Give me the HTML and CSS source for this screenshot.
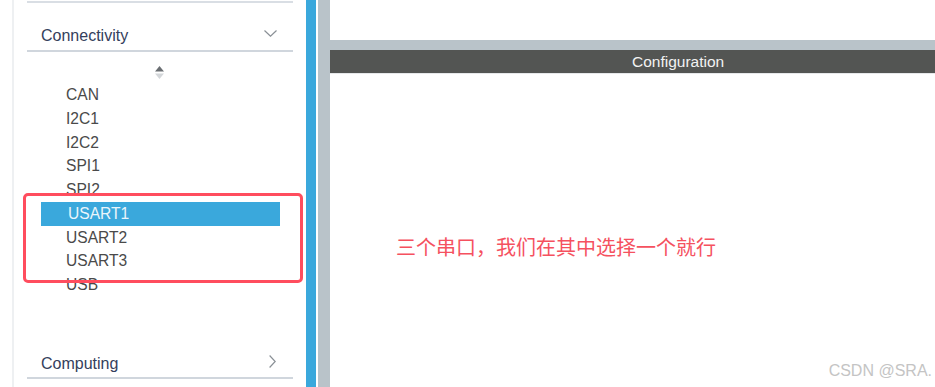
FILE: index.html
```html
<!DOCTYPE html>
<html lang="zh">
<head>
<meta charset="utf-8">
<title>Connectivity</title>
<link rel="stylesheet" href="styles.css">
</head>
<body>
<div class="app">
  <aside class="sidebar">
    <div class="sidebar-inner">
      <div class="rule"></div>
      <div class="cat-header">
        <span class="cat-title">Connectivity</span>
        <svg class="chev-down" width="13" height="7" viewBox="0 0 13 7"><path d="M0.5 0.5 L6.5 6.2 L12.5 0.5" fill="none" stroke="#8a9096" stroke-width="1.2"/></svg>
      </div>
      <div class="scroll-arrows">
        <svg width="9" height="13" viewBox="0 0 9 13"><path d="M4.5 0 L9 5.5 L0 5.5 Z" fill="#6a6e72"/><path d="M0 7.5 L9 7.5 L4.5 13 Z" fill="#d4d7da"/></svg>
      </div>
      <ul class="periph-list">
        <li class="item">CAN</li>
        <li class="item">I2C1</li>
        <li class="item">I2C2</li>
        <li class="item">SPI1</li>
        <li class="item">SPI2</li>
        <li class="item selected">USART1</li>
        <li class="item">USART2</li>
        <li class="item">USART3</li>
        <li class="item">USB</li>
      </ul>
      <div class="cat-header bottom">
        <span class="cat-title">Computing</span>
        <svg class="chev-right" width="7" height="13" viewBox="0 0 7 13"><path d="M0.6 0.5 L6.2 6.5 L0.6 12.5" fill="none" stroke="#8a9096" stroke-width="1.2"/></svg>
      </div>
      <div class="annotation-box"></div>
    </div>
  </aside>
  <div class="blue-bar"></div>
  <div class="split-gap"></div>
  <main class="main">
    <div class="top-pane"></div>
    <section class="config-pane">
      <div class="config-header">Configuration</div>
      <div class="config-body">
        <p class="note">三个串口，我们在其中选择一个就行</p>
        <span class="watermark">CSDN @SRA.</span>
      </div>
    </section>
  </main>
</div>
</body>
</html>
```
FILE: styles.css
```css
* { box-sizing: border-box; }
html, body {
  margin: 0;
  padding: 0;
  width: 935px;
  height: 387px;
  overflow: hidden;
  background: #ffffff;
  font-family: "Liberation Sans", Arial, sans-serif;
}
.app {
  display: flex;
  height: 387px;
}
.sidebar {
  width: 306px;
  flex: 0 0 306px;
  padding-left: 12px;
  background: #ffffff;
}
.sidebar-inner {
  position: relative;
  height: 100%;
  border-left: 2px solid #eef0f2;
  padding: 1px 13px 8px 13px;
  display: flex;
  flex-direction: column;
}
.rule {
  height: 2px;
  background: #d9dee4;
}
.cat-header {
  display: flex;
  align-items: center;
  justify-content: space-between;
  padding: 22px 16px 3px 14px;
  border-bottom: 2px solid #d0d6dd;
  line-height: 22px;
}
.cat-header.bottom {
  margin-top: auto;
  padding-top: 0;
  padding-right: 17px;
}
.cat-title {
  font-size: 16px;
  color: #34405c;
}
.cat-header.bottom .cat-title {
  position: relative;
  top: 1px;
}
.chev-down { margin-top: -6px; }
.chev-right { margin-top: -4px; }
.scroll-arrows {
  display: flex;
  justify-content: center;
  margin-top: 14px;
  padding-right: 2px;
  height: 13px;
}
.periph-list {
  list-style: none;
  margin: 4px 0 0 14px;
  padding: 0;
  width: 239px;
}
.item {
  font-size: 15.6px;
  line-height: 22.75px;
  padding-top: 1px;
  color: #4a4a4a;
  padding-left: 25px;
}
.item.selected {
  background: #3aa8dc;
  color: #eaf5fb;
  padding-left: 27px;
}
.annotation-box {
  position: absolute;
  left: 9px;
  top: 193px;
  width: 280px;
  height: 90px;
  border: 3px solid #ff4d5e;
  border-radius: 5px;
  pointer-events: none;
}
.blue-bar {
  width: 10px;
  flex: 0 0 10px;
  background: #3aa8dc;
}
.split-gap {
  width: 2px;
  flex: 0 0 2px;
  background: #ffffff;
}
.main {
  flex: 1;
  display: flex;
  flex-direction: column;
  background: #b9c3c9;
  padding-left: 12px;
}
.top-pane {
  height: 40px;
  background: #ffffff;
}
.config-pane {
  margin-top: 10px;
  flex: 1;
  display: flex;
  flex-direction: column;
  background: #ffffff;
}
.config-header {
  height: 23px;
  background: #535553;
  color: #f2f2f2;
  font-size: 15.5px;
  line-height: 23px;
  padding-left: 302px;
  border-bottom: 1px solid #e6e8ea;
  box-sizing: content-box;
}
.config-body {
  position: relative;
  flex: 1;
}
.note {
  margin: 161px 0 0 66px;
  font-family: "Noto Sans CJK SC", "Noto Sans", sans-serif;
  font-size: 20px;
  line-height: 24px;
  color: #f5515f;
}
.watermark {
  position: absolute;
  right: 3px;
  bottom: 7px;
  font-size: 16px;
  color: #c4c4c4;
}
```
